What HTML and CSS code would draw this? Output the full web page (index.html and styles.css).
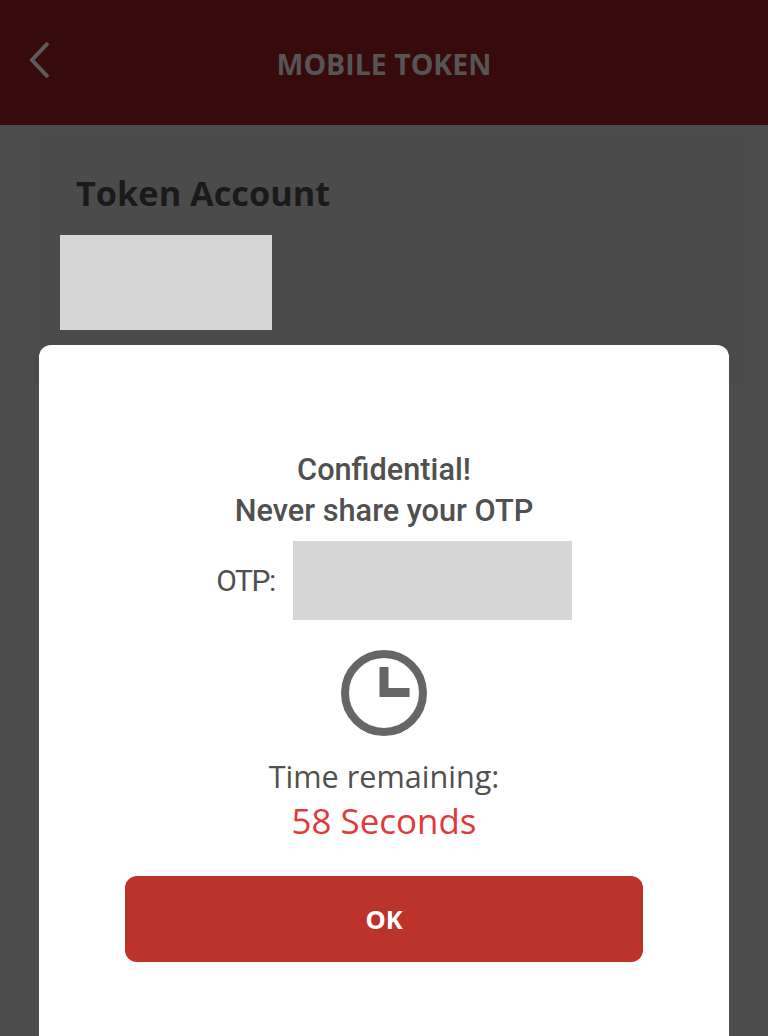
FILE: index.html
```html
<!DOCTYPE html>
<html lang="en">
<head>
    <meta charset="UTF-8">
    <meta name="viewport" content="width=device-width, initial-scale=1.0">
    <title>Mobile Token</title>
    <link rel="stylesheet" href="styles.css">
</head>
<body>

<header class="top-bar">
    <a class="back-link" href="#" aria-label="Back">
        <svg width="24" height="38" viewBox="0 0 24 38">
            <path d="M21 2 L5 19 L21 36" fill="none" stroke="#5b5b5b" stroke-width="4"/>
        </svg>
    </a>
    <h1>MOBILE TOKEN</h1>
</header>

<div class="content">
    <div class="account-card">
        <h2>Token Account</h2>
        <div class="hidden-box account-box"></div>
    </div>
</div>

<div class="modal">
    <p class="warning">Confidential!<br>Never share your OTP</p>
    <div class="otp-row">
        <span class="otp-label">OTP:</span>
        <div class="hidden-box otp-box"></div>
    </div>
    <svg class="clock" width="88" height="88" viewBox="0 0 88 88">
        <circle cx="44" cy="44" r="39" fill="none" stroke="#666" stroke-width="8"/>
        <path d="M39.500 18 H48.500 V39 H69.500 V48 H39.500 Z" fill="#666"/>
    </svg>
    <div class="time-label">Time remaining:</div>
    <div class="time-value">58 Seconds</div>
    <button class="ok-button">OK</button>
</div>

</body>
</html>
```

FILE: styles.css
```css
html, body {
    height: 100%;
}

body {
    margin: 0;
    background-color: #4c4c4c;
    font-family: 'Open Sans', 'Liberation Sans', sans-serif;
    overflow: hidden;
    position: relative;
}

.top-bar {
    height: 125px;
    background-color: #370b0b;
    display: flex;
    align-items: center;
    justify-content: center;
    position: relative;
}

.top-bar h1 {
    margin: 2px 0 0;
    font-size: 28.500px;
    font-weight: 700;
    color: #555;
}

.back-link {
    position: absolute;
    left: 27px;
    top: 41px;
    display: block;
    line-height: 0;
}

.content {
    padding: 12px 22px 0 34px;
}

.account-card {
    height: 248px;
    box-sizing: border-box;
    background-color: #4b4b4b;
    border-radius: 6px;
    padding: 31px 26px 0;
}

.account-card h2 {
    margin: 0 0 17px 16px;
    font-size: 34.300px;
    line-height: 50px;
    font-weight: 700;
    color: #1a1a1a;
}

.hidden-box {
    background-color: #d6d6d6;
}

.account-box {
    width: 212px;
    height: 95px;
}

.modal {
    position: absolute;
    left: 39px;
    top: 345px;
    width: 690px;
    height: 720px;
    background-color: #fff;
    border-radius: 12px;
    padding-top: 104px;
    box-sizing: border-box;
    display: flex;
    flex-direction: column;
    align-items: center;
    color: #505050;
}

.warning {
    margin: 0;
    font-family: Roboto, 'Liberation Sans', sans-serif;
    font-size: 30.700px;
    font-weight: 500;
    line-height: 41px;
    text-align: center;
}

.otp-row {
    display: flex;
    align-items: center;
    margin-top: 10px;
    gap: 18px;
    transform: translateX(10px);
}

.otp-label {
    font-family: Roboto, 'Liberation Sans', sans-serif;
    font-size: 30px;
    letter-spacing: -1.500px;
}

.otp-box {
    width: 279px;
    height: 79px;
}

.clock {
    margin-top: 29px;
    display: block;
}

.time-label {
    margin-top: 16px;
    font-size: 30.600px;
    line-height: 46px;
}

.time-value {
    font-size: 34.900px;
    line-height: 44px;
    color: #e03a3a;
}

.ok-button {
    margin-top: 33px;
    width: 518px;
    height: 86px;
    border: none;
    border-radius: 12px;
    background-color: #bc332b;
    color: #fff;
    font-family: inherit;
    font-size: 25.500px;
    font-weight: 700;
}
```
